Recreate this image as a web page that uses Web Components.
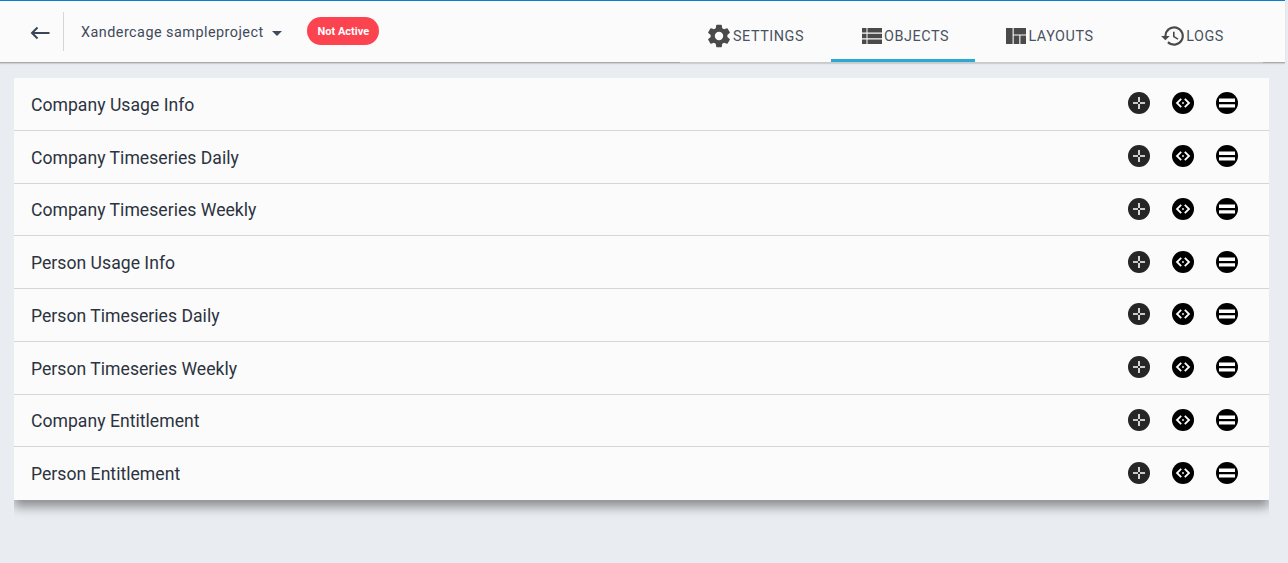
<!DOCTYPE html>
<html lang="en">
<head>
<meta charset="UTF-8">
<title>Objects</title>
<style>
    html, body { margin: 0; height: 100%; }
    body {
        background: #e9edf2;
        font-family: Roboto, "Liberation Sans", sans-serif;
        overflow: hidden;
    }
</style>
</head>
<body>
<project-header name="Xandercage sampleproject" status="Not Active"></project-header>
<object-list>
    <object-row>Company Usage Info</object-row>
    <object-row>Company Timeseries Daily</object-row>
    <object-row>Company Timeseries Weekly</object-row>
    <object-row>Person Usage Info</object-row>
    <object-row>Person Timeseries Daily</object-row>
    <object-row>Person Timeseries Weekly</object-row>
    <object-row>Company Entitlement</object-row>
    <object-row>Person Entitlement</object-row>
</object-list>

<script>
    const ICONS = {
        settings: '<svg viewBox="0 0 24 24" width="28" height="28"><path fill="#4a4a4a" d="M19.14 12.94c.04-.3.06-.61.06-.94s-.02-.64-.07-.94l2.03-1.58a.49.49 0 0 0 .12-.61l-1.92-3.32a.49.49 0 0 0-.59-.22l-2.39.96c-.5-.38-1.03-.7-1.62-.94l-.36-2.54a.48.48 0 0 0-.48-.41h-3.84a.48.48 0 0 0-.47.41l-.36 2.54c-.59.24-1.13.57-1.62.94l-2.39-.96a.48.48 0 0 0-.59.22L2.74 8.87a.48.48 0 0 0 .12.61l2.03 1.58c-.05.3-.09.63-.09.94s.02.64.07.94l-2.03 1.58a.49.49 0 0 0-.12.61l1.92 3.32c.12.22.37.29.59.22l2.39-.96c.5.38 1.03.7 1.62.94l.36 2.54c.05.24.24.41.48.41h3.84c.24 0 .44-.17.47-.41l.36-2.54c.59-.24 1.13-.56 1.62-.94l2.39.96c.22.08.47 0 .59-.22l1.92-3.32a.48.48 0 0 0-.12-.61l-2.01-1.58zM12 15.6A3.6 3.6 0 1 1 12 8.4a3.6 3.6 0 0 1 0 7.2z"/></svg>',
        objects: '<svg viewBox="0 0 24 24" width="24" height="24"><path fill="#4a4a4a" d="M2 4h4.5v4.6H2zM7.5 4H22v4.6H7.5zM2 9.7h4.5v4.6H2zM7.5 9.7H22v4.6H7.5zM2 15.4h4.5V20H2zM7.5 15.4H22V20H7.5z"/></svg>',
        layouts: '<svg viewBox="0 0 24 24" width="24" height="24"><path fill="#4a4a4a" d="M2 4h6.6v16H2zM9.7 4H22v6.4H9.7zM9.7 11.5h5.6V20H9.7zM16.4 11.5H22V20h-5.6z"/></svg>',
        logs: '<svg viewBox="0 0 24 24" width="26" height="26"><path fill="#4a4a4a" d="M13 3a9 9 0 0 0-9 9H1l3.89 3.89.07.14L9 12H6a7 7 0 1 1 2.05 4.95l-1.42 1.42A9 9 0 1 0 13 3zm-1 5v5l4.28 2.54.72-1.21-3.5-2.08V8H12z"/></svg>'
    };

    customElements.define("project-header", class extends HTMLElement {
        connectedCallback() {
            const tabs = [
                ["settings", "SETTINGS", 151, false, "padding-right:2px"],
                ["objects", "OBJECTS", 144, true, "padding-left:3px"],
                ["layouts", "LAYOUTS", 144, false, "padding-left:4px"],
                ["logs", "LOGS", 144, false, "padding-left:2px"]
            ];
            this.attachShadow({ mode: "open" }).innerHTML = `
                <style>
                    :host {
                        display: flex;
                        height: 63px;
                        box-sizing: border-box;
                        margin-right: 3px;
                        background: #fbfbfb;
                        border-top: 1px solid #0a7fd4;
                        border-bottom: 1px solid #a9abad;
                        box-shadow: 0 1px 1px rgba(0,0,0,.12);
                        padding-left: 29px;
                        color: #3f4a5a;
                    }
                    .left { display: flex; align-items: center; height: 60px; margin-right: auto; }
                    .back { width: 23px; height: 16px; display: block; margin-top: 3px; }
                    .sep { width: 1px; height: 39px; background: #d6d6d6; margin: 0 17px 0 11px; }
                    .name { font-size: 14.4px; letter-spacing: .47px; margin-top: 2px; }
                    .caret { width: 0; height: 0; border: 5px solid transparent; border-top-color: #3f4a5a; border-bottom: 0; margin: 4px 25px 0 8.7px; }
                    .badge {
                        background: #fb4450; color: #fff; font-size: 11px; font-weight: 700;
                        height: 28px; width: 72px; border-radius: 14px;
                        display: flex; align-items: center; justify-content: center;
                    }
                    .tabs {
                        display: flex; margin: 0 22px -1px 0;
                        border-bottom: 1px solid #c8c9ca;
                    }
                    .tab {
                        display: flex; align-items: center; justify-content: center;
                        height: 61px; box-sizing: border-box; padding-top: 12px;
                        font-size: 14.4px; letter-spacing: .55px; color: #4a5260;
                        border-bottom: 3px solid transparent;
                    }
                    .tab.active { border-bottom-color: #2aa9d2; }
                </style>
                <div class="left">
                    <svg class="back" viewBox="0 0 23 16"><path d="M20.5 8H3M8.5 2.5 3 8l5.5 5.5" fill="none" stroke="#3a4656" stroke-width="2"/></svg>
                    <div class="sep"></div>
                    <span class="name">${this.getAttribute("name")}</span>
                    <span class="caret"></span>
                    <span class="badge">${this.getAttribute("status")}</span>
                </div>
                <nav class="tabs">
                    ${tabs.map(t => `<div class="tab ${t[3] ? "active" : ""}" style="width:${t[2]}px;${t[4]}">${ICONS[t[0]]}<span>${t[1]}</span></div>`).join("")}
                </nav>`;
        }
    });

    customElements.define("object-list", class extends HTMLElement {
        connectedCallback() {
            this.attachShadow({ mode: "open" }).innerHTML = `
                <style>
                    :host {
                        display: block;
                        margin: 15px 19px 0 14px;
                        background: #fbfbfb;
                        box-shadow: 0 7px 10px rgba(0,0,0,.4);
                        clip-path: inset(0 0 -20px 0);
                    }
                </style>
                <slot></slot>`;
        }
    });

    customElements.define("object-row", class extends HTMLElement {
        connectedCallback() {
            this.attachShadow({ mode: "open" }).innerHTML = `
                <style>
                    :host {
                        display: flex; align-items: center;
                        height: 52.75px; box-sizing: border-box;
                        padding: 2px 31px 0 17px;
                        font-size: 17.6px; letter-spacing: .02px; color: #2c3340;
                        border-bottom: 1px solid #d4d5d7;
                    }
                    :host(:last-child) { border-bottom-color: transparent; }
                    .label { margin-right: auto; }
                    .actions { display: flex; gap: 22px; margin-top: -3px; }
                    svg { display: block; width: 22px; height: 22px; }
                </style>
                <span class="label"><slot></slot></span>
                <div class="actions">
                    <svg viewBox="0 0 22 22"><circle cx="11" cy="11" r="11" fill="#262626"/><path d="M11 5v5M11 12v5M5 11h5M12 11h5" stroke="#fff" stroke-width="1.6"/></svg>
                    <svg viewBox="0 0 22 22"><circle cx="11" cy="11" r="11" fill="#000"/><path d="M9.2 6.8 5 11l4.2 4.2M12.8 6.8 17 11l-4.2 4.2" fill="none" stroke="#fff" stroke-width="1.8"/><circle cx="11" cy="11" r=".9" fill="#fff"/></svg>
                    <svg viewBox="0 0 22 22"><circle cx="11" cy="11" r="11" fill="#000"/><path d="M3 6.6h16v3.3H3zM3 12.2h16v3.3H3z" fill="#fff"/></svg>
                </div>`;
        }
    });
</script>
</body>
</html>
